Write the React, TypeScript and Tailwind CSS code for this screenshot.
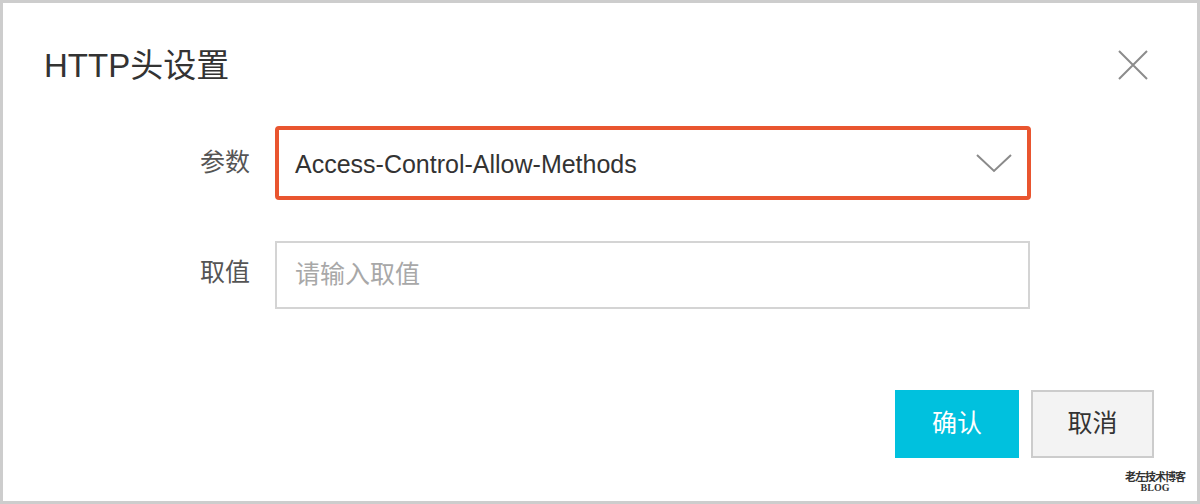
import React from "react";

const font = "font-['Liberation_Sans','Noto_Sans_CJK_SC',sans-serif]";

const App = () => {
  return (
    <div className={`relative w-[1200px] h-[504px] border-[3px] border-[#cdcdcd] bg-white flex flex-col ${font}`}>
      {/* header */}
      <div className="flex items-center justify-between h-[44px] mt-[40px] pl-[41px] pr-[48px]">
        <h2 className="text-[33px] text-[#333333] leading-none">HTTP头设置</h2>
        <svg width="32" height="32" viewBox="0 0 32 32" className="text-[#8c8c8c]">
          <path d="M2 2 L30 30 M30 2 L2 30" stroke="currentColor" strokeWidth="2" fill="none" />
        </svg>
      </div>

      {/* form */}
      <div className="mt-[39px] flex flex-col gap-[41px]">
        <div className="flex items-center pl-[191px] gap-[25px]">
          <label className="w-[56px] text-right text-[25px] text-[#555555]">参数</label>
          <div className="w-[756px] h-[74px] border-4 border-[#e9552f] rounded-[4px] flex items-center justify-between pl-[16px] pr-[15px]">
            <span className="text-[25px] text-[#333333] mt-[4px]">Access-Control-Allow-Methods</span>
            <svg width="36" height="20" viewBox="0 0 36 20" className="text-[#8a8a8a]">
              <path d="M1 2 L18 18 L35 2" stroke="currentColor" strokeWidth="2" fill="none" />
            </svg>
          </div>
        </div>
        <div className="flex items-center pl-[191px] gap-[25px]">
          <label className="w-[56px] text-right text-[25px] text-[#555555] -mt-[4px]">取值</label>
          <div className="w-[755px] h-[68px] border-2 border-[#d4d4d4] flex items-center pl-[18px]">
            <span className="text-[25px] text-[#a8a8a8]">请输入取值</span>
          </div>
        </div>
      </div>

      {/* footer */}
      <div className="mt-[81px] flex justify-end gap-[12px] pr-[43px]">
        <button className="w-[124px] h-[68px] bg-[#00c1de] text-white text-[25px]">确认</button>
        <button className="w-[123px] h-[68px] bg-[#f3f3f3] border-2 border-[#cccccc] text-[#333333] text-[25px]">取消</button>
      </div>

      <div className="absolute right-[12px] bottom-[8px] flex flex-col items-center leading-none text-[#333] font-bold">
        <span className="text-[11px] tracking-[-1px]">老左技术博客</span>
        <span className="text-[10px] font-['Liberation_Serif',serif]">BLOG</span>
      </div>
    </div>
  );
};

export default App;
